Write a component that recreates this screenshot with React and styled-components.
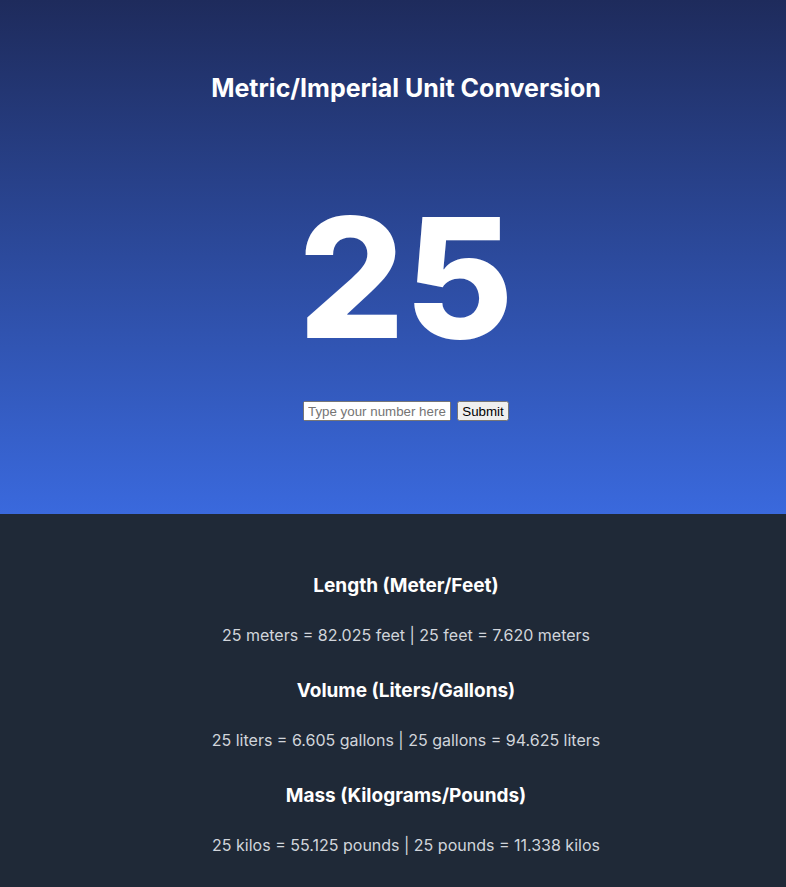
import React, { useState } from 'react';
import styled, { createGlobalStyle } from 'styled-components';

const GlobalStyle = createGlobalStyle`
  body {
    margin: 0;
    font-family: Inter, "Noto Sans", sans-serif;
    background: #1f2937;
  }
`

const Hero = styled.section`
  height: 514px;
  box-sizing: border-box;
  padding: 72px 0 0 26px;
  display: flex;
  flex-direction: column;
  align-items: center;
  background: linear-gradient(180deg, #1e2b5c 0%, #3a69dd 100%);
  color: #ffffff;
`

const Title = styled.h1`
  margin: 0;
  font-size: 25px;
  line-height: 32px;
  font-weight: 700;
`

const BigNumber = styled.div`
  margin-top: 90px;
  font-size: 167px;
  line-height: 167px;
  font-weight: 800;
`

const Form = styled.form`
  margin-top: 40px;
  display: flex;
  gap: 6px;
  align-items: center;
`

const NumberInput = styled.input`
  box-sizing: border-box;
  width: 148px;
  height: 20px;
  padding: 1px 3px;
  font-family: "Liberation Sans", Arial, sans-serif;
  font-size: 13.33px;
`

const SubmitButton = styled.button`
  box-sizing: border-box;
  width: 52px;
  height: 20px;
  font-family: "Liberation Sans", Arial, sans-serif;
  font-size: 13.33px;
  padding: 0;
`

const Results = styled.section`
  padding: 58px 0 24px 26px;
  display: flex;
  flex-direction: column;
  align-items: center;
  background: #1f2937;
`

const Heading = styled.h2`
  margin: 0;
  font-size: 19px;
  line-height: 28px;
  font-weight: 700;
  color: #ffffff;
`

const Line = styled.p`
  margin: 23px 0 30px;
  font-size: 16px;
  line-height: 24px;
  color: #d1d5db;
  &:last-child {
    margin-bottom: 0;
  }
`

const conversions = [
  { title: 'Length (Meter/Feet)', a: 'meters', b: 'feet', f: 3.281 },
  { title: 'Volume (Liters/Gallons)', a: 'liters', b: 'gallons', f: 0.2642 },
  { title: 'Mass (Kilograms/Pounds)', a: 'kilos', b: 'pounds', f: 2.205 },
]

export default function App() {
  const [value, setValue] = useState(25)
  const [input, setInput] = useState('')

  const submit = (e) => {
    e.preventDefault()
    if (input !== '' && !isNaN(Number(input))) setValue(Number(input))
  }

  return (
    <>
      <GlobalStyle />
      <Hero>
        <Title>Metric/Imperial Unit Conversion</Title>
        <BigNumber>{value}</BigNumber>
        <Form onSubmit={submit}>
          <NumberInput
            type="text"
            placeholder="Type your number here"
            value={input}
            onChange={(e) => setInput(e.target.value)}
          />
          <SubmitButton type="submit">Submit</SubmitButton>
        </Form>
      </Hero>
      <Results>
        {conversions.map((c) => (
          <React.Fragment key={c.title}>
            <Heading>{c.title}</Heading>
            <Line>
              {value} {c.a} = {(value * c.f).toFixed(3)} {c.b} | {value} {c.b} = {(value / c.f).toFixed(3)} {c.a}
            </Line>
          </React.Fragment>
        ))}
      </Results>
    </>
  )
}
